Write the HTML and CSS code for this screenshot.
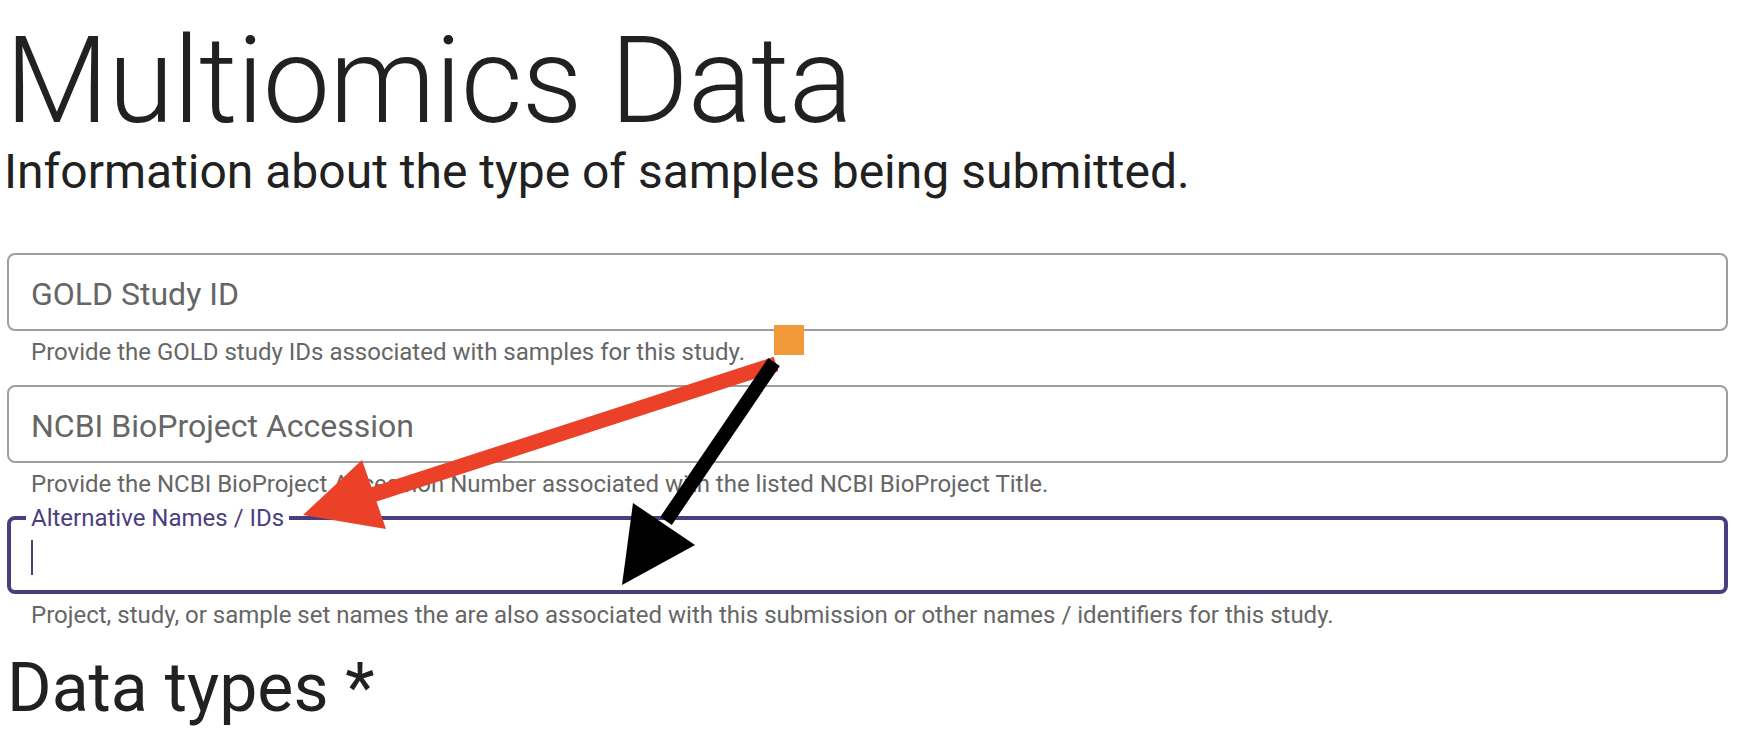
FILE: index.html
```html
<!DOCTYPE html>
<html lang="en">
<head>
<meta charset="utf-8">
<title>Multiomics Data</title>
<link rel="stylesheet" href="styles.css">
</head>
<body>
<main class="page">
  <h1 class="title">Multiomics Data</h1>
  <p class="subtitle">Information about the type of samples being submitted.</p>

  <div class="fields">
    <div class="field">
      <div class="box">
        <span class="box-label">GOLD Study ID</span>
      </div>
      <div class="hint">Provide the GOLD study IDs associated with samples for this study.</div>
    </div>

    <div class="field">
      <div class="box">
        <span class="box-label">NCBI BioProject Accession</span>
      </div>
      <div class="hint">Provide the NCBI BioProject Accession Number associated with the listed NCBI BioProject Title.</div>
    </div>

    <div class="field">
      <div class="box box-focused">
        <span class="float-label">Alternative Names / IDs</span>
        <span class="caret"></span>
      </div>
      <div class="hint">Project, study, or sample set names the are also associated with this submission or other names / identifiers for this study.</div>
    </div>
  </div>

  <h2 class="section">Data types *</h2>
</main>

<svg class="annotations" width="1742" height="734" viewBox="0 0 1742 734" xmlns="http://www.w3.org/2000/svg">
  <rect x="774" y="325" width="30" height="30" fill="#F2993A"/>
  <line x1="776" y1="364" x2="372" y2="495" stroke="#EA4128" stroke-width="15"/>
  <polygon points="303,515 362,460 386,529" fill="#EA4128"/>
  <line x1="774" y1="362" x2="666" y2="521" stroke="#000" stroke-width="14"/>
  <polygon points="622,585 633,503 695,545" fill="#000"/>
</svg>
</body>
</html>
```

FILE: styles.css
```css
html, body {
  margin: 0;
  padding: 0;
  background: #ffffff;
}

body {
  font-family: Roboto, "Liberation Sans", Arial, sans-serif;
  color: #212121;
  width: 1742px;
  height: 734px;
  overflow: hidden;
  position: relative;
}

.page {
  padding: 21px 14px 0 7px;
  display: flex;
  flex-direction: column;
}

.title {
  margin: 0 0 0 -2px;
  font-size: 120px;
  line-height: 120px;
  font-weight: 300;
  letter-spacing: -0.9px;
}

.subtitle {
  margin: 3px 0 0 -3px;
  font-size: 48px;
  line-height: 56px;
  font-weight: 400;
}

.fields {
  margin-top: 53px;
  display: flex;
  flex-direction: column;
  gap: 18.7px;
}

.field {
  display: flex;
  flex-direction: column;
}

.box {
  position: relative;
  box-sizing: border-box;
  height: 78px;
  border: 2px solid #9e9e9e;
  border-radius: 8px;
  padding: 4px 0 0 22px;
  display: flex;
  align-items: center;
}

.box-label {
  font-size: 32px;
  line-height: 32px;
  color: #666666;
}

.box-focused {
  border: 4px solid #4b3e80;
  padding-left: 20px;
}

.float-label {
  position: absolute;
  left: 15px;
  top: -14px;
  padding: 0 5px;
  background: #ffffff;
  font-size: 24px;
  line-height: 24px;
  color: #4b3e80;
}

.caret {
  display: block;
  width: 2px;
  height: 35px;
  background: #4b3e80;
}

.hint {
  padding: 7px 0 0 24px;
  font-size: 24px;
  line-height: 28px;
  color: #666666;
  white-space: nowrap;
}

.section {
  margin: 25px 0 0 0;
  font-size: 68px;
  line-height: 68px;
  font-weight: 400;
}

.annotations {
  position: absolute;
  top: 0;
  left: 0;
  pointer-events: none;
}
```
